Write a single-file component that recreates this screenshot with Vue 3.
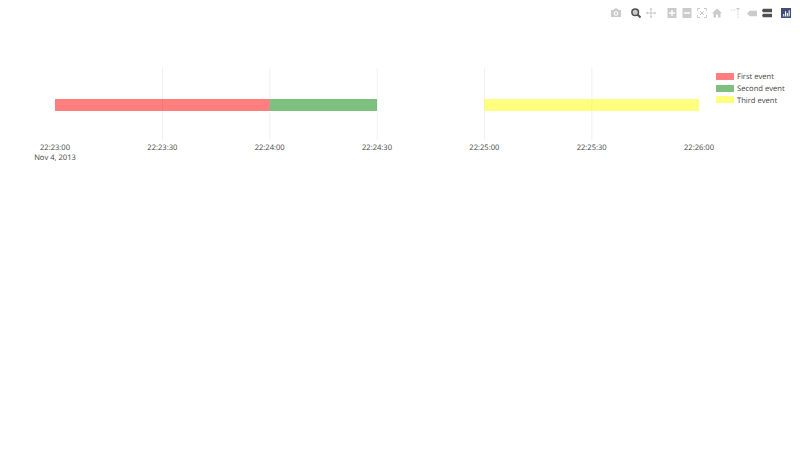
<script setup>
const startX = 55
const pxPerSec = 644 / 180
const x = (s) => startX + s * pxPerSec
const ticks = [0, 30, 60, 90, 120, 150, 180].map((s) => {
  const m = 23 + Math.floor(s / 60)
  const ss = s % 60 === 0 ? '00' : '30'
  return { s, x: x(s), label: `22:${m}:${ss}` }
})
const gridlines = ticks.slice(1, -1).map((t) => ({ s: t.s, x: t.x + 0.2 }))
const bars = [
  { from: 0, to: 60, color: 'rgba(255, 0, 0, 0.5)' },
  { from: 60, to: 90, color: 'rgba(0, 128, 0, 0.5)' },
  { from: 120, to: 180, color: 'rgba(255, 255, 0, 0.5)' },
]
const legend = [
  { name: 'First event', color: 'rgba(255, 0, 0, 0.5)' },
  { name: 'Second event', color: 'rgba(0, 128, 0, 0.5)' },
  { name: 'Third event', color: 'rgba(255, 255, 0, 0.5)' },
]
</script>

<template>
  <div class="page">
    <div class="modebar">
      <div class="group">
        <svg width="10" height="10" viewBox="0 0 10 10"><path fill="#cbcbcb" fill-rule="evenodd" d="M0 2h2.6l.8-1.4h3.2L7.4 2H10v7H0zM5 3.2a2.3 2.3 0 1 0 0 4.6 2.3 2.3 0 0 0 0-4.6zM5 4.200a1.300 1.300 0 1 1 0 2.600 1.300 1.300 0 0 1 0-2.600z"/></svg>
      </div>
      <div class="group after-camera">
        <svg width="10" height="10" viewBox="0 0 10 10"><circle cx="4.200" cy="4.200" r="3.300" fill="#c9c9c9" stroke="#505050" stroke-width="1.500"/><path d="M6.500 6.500l3 3" stroke="#505050" stroke-width="2"/></svg>
        <svg width="10" height="10" viewBox="0 0 11 11"><path d="M5.500 0v11M0 5.500h11" stroke="#cbcbcb" stroke-width="1.100" fill="none"/><path fill="#cbcbcb" d="M5.500 0l1.600 2H3.900zM5.500 11l1.600-2H3.900zM0 5.500l2-1.600v3.200zM11 5.500l-2-1.600v3.200z"/></svg>
      </div>
      <div class="group after-drag">
        <svg width="10" height="10" viewBox="0 0 10 10"><path fill="#cbcbcb" fill-rule="evenodd" d="M.5 0h9v10h-9zM4.300 2v2.300H2v1.400h2.300V8h1.400V5.700H8V4.300H5.700V2z"/></svg>
        <svg width="10" height="10" viewBox="0 0 10 10"><path fill="#cbcbcb" fill-rule="evenodd" d="M.5 0h9v10h-9zM2 4.200v1.600h6V4.200z"/></svg>
        <svg width="10" height="10" viewBox="0 0 10 10"><path fill="none" stroke="#cbcbcb" stroke-width="1" d="M.5 3V.5H3M7 .5h2.500V3M.5 7v2.500H3M7 9.500h2.500V7M3 3l4 4M7 3L3 7"/></svg>
        <svg width="10" height="10" viewBox="0 0 10 10"><path fill="#cbcbcb" d="M5 .5L10 5.200H8.500V9.500H6V6.500H4V9.500H1.500V5.200H0z"/></svg>
      </div>
      <div class="group after-view">
        <svg class="spike" width="10" height="10" viewBox="0 0 10 10"><path fill="none" stroke="#d6d6d6" stroke-width="1.200" stroke-dasharray="1.500 1.200" d="M0 2h5M7 3v7"/><path fill="#cbcbcb" d="M5 0h4L7 2.500z"/></svg>
        <svg width="10" height="7" viewBox="0 0 10 7"><path fill="#cbcbcb" d="M0 3.500L2.800.8h7.200v5.400H2.800z"/></svg>
        <svg width="10" height="10" viewBox="0 0 10 10"><path fill="#505050" d="M1 .8h9v3.400H1L0 2.500zM1 5.800h9v3.400H1L0 7.500z"/></svg>
      </div>
      <div class="group after-hover">
        <svg width="10" height="10" viewBox="0 0 11 11"><rect width="11" height="11" fill="#3f4f75"/><path d="M3 9V6.500M5 9V3.500M7 9V5.500M9 9V2.500" stroke="#fff" stroke-width="1.200"/><path d="M1.500 9h8" stroke="#8fa0c8" stroke-width=".7"/></svg>
      </div>
    </div>

    <div class="chart">
      <svg class="plot" width="716" height="110" viewBox="0 0 716 110">
        <line v-for="g in gridlines" :key="g.s" :x1="g.x" :x2="g.x" y1="0" y2="72" stroke="#f0f0f0" />
        <rect
          v-for="(b, i) in bars"
          :key="i"
          :x="x(b.from)"
          y="31"
          :width="(b.to - b.from) * pxPerSec"
          height="12"
          :fill="b.color"
        />
        <text v-for="t in ticks" :key="'l' + t.s" :x="t.x" y="82" text-anchor="middle" class="tick">{{ t.label }}</text>
        <text x="55" y="92" text-anchor="middle" class="tick">Nov 4, 2013</text>
      </svg>
      <ul class="legend">
        <li v-for="item in legend" :key="item.name">
          <span class="swatch" :style="{ background: item.color }"></span>
          <span class="label">{{ item.name }}</span>
        </li>
      </ul>
    </div>
  </div>
</template>

<style>
html, body { margin: 0; background: #fff; }
</style>

<style scoped>
.page {
  width: 800px;
  height: 450px;
  overflow: hidden;
  background: #fff;
  font-family: "Open Sans", "Liberation Sans", sans-serif;
  text-rendering: geometricPrecision;
}
.modebar {
  height: 68px;
  box-sizing: border-box;
  padding: 8px 9px 0 0;
  display: flex;
  justify-content: flex-end;
  align-items: flex-start;
}
.group {
  display: flex;
  align-items: center;
  gap: 5px;
  height: 10px;
}
.after-camera { margin-left: 10px; }
.after-drag { margin-left: 11px; }
.after-view { margin-left: 9px; }
.after-hover { margin-left: 9px; }
.spike { margin-right: 1px; }
.group svg { display: block; flex: none; }
.chart {
  display: flex;
  align-items: flex-start;
}
.plot { display: block; flex: none; overflow: visible; }
.tick {
  font-size: 7.600px;
  fill: #444;
}
.legend {
  list-style: none;
  margin: 2.500px 0 0;
  padding: 0;
}
.legend li {
  display: flex;
  align-items: center;
  height: 11.750px;
}
.swatch {
  width: 18px;
  height: 7px;
  margin-right: 3px;
}
.label {
  font-size: 7.600px;
  color: #444;
  white-space: nowrap;
  margin-top: 2px;
}
</style>
